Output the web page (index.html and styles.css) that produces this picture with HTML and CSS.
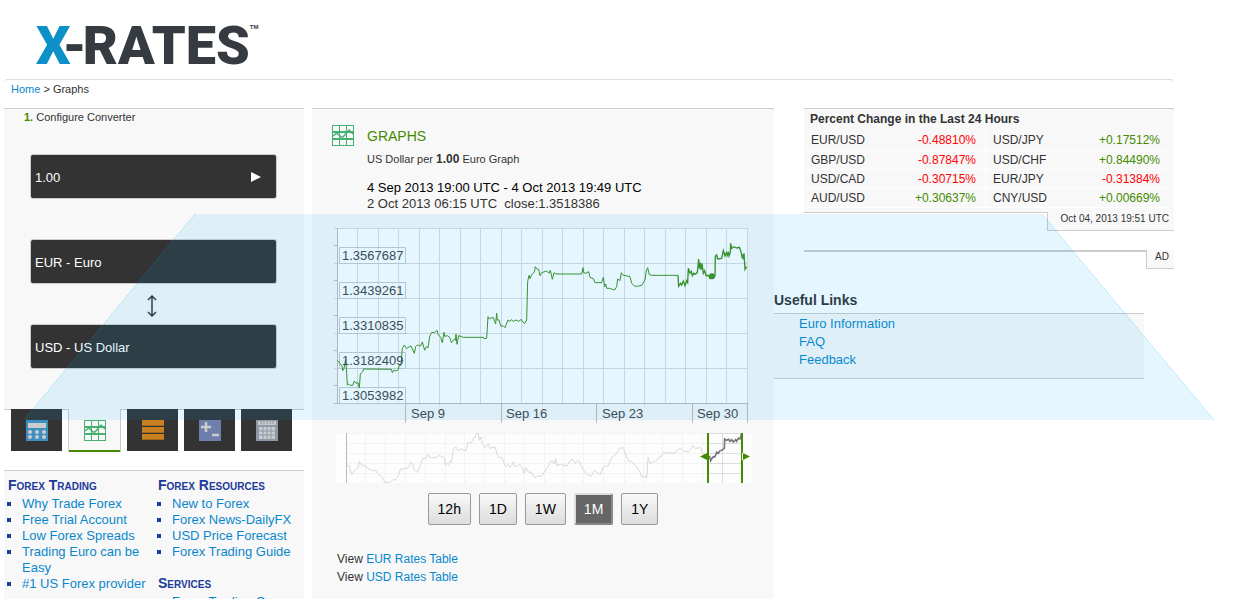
FILE: index.html
```html
<!DOCTYPE html>
<html lang="en">
<head>
<meta charset="utf-8">
<title>X-RATES Graphs</title>
<link rel="stylesheet" href="styles.css">
</head>
<body>
<svg class="defs" width="0" height="0" aria-hidden="true">
  <symbol id="graph-icon" viewBox="0 0 22 21">
    <path d="M0 0h22v21H0z" fill="#46b070"/>
    <path d="M1 1h6v5H1zM8 1h6v5H8zM15 1h6v5h-6zM1 8h6v5H1zM8 8h6v5H8zM15 8h6v5h-6zM1 15h6v5H1zM8 15h6v5H8zM15 15h6v5h-6z" fill="#f8f8f8"/>
    <path d="M1 11l4-3 4 4 2 0 6-7 4 4" fill="none" stroke="#46b070" stroke-width="1.500"/>
  </symbol>
</svg>
<div class="page">
  <header class="masthead">
    <a class="logo" href="#"><span class="logo-x">X</span><span class="logo-dash">-</span>RATES<small class="tm">TM</small></a>
  </header>
  <nav class="crumbs"><a href="#">Home</a> &gt; Graphs</nav>
  <main class="columns">
    <div class="left">
      <form class="converter">
        <h2 class="step"><b>1.</b> Configure Converter</h2>
        <div class="field amount">
          <input class="control" type="text" value="1.00" aria-label="Amount">
          <button class="go" type="button" aria-label="Convert"><svg width="10" height="10" viewBox="0 0 10 10"><path d="M0 0l10 5-10 5z" fill="#fff"/></svg></button>
        </div>
        <div class="field from"><select class="control" aria-label="From currency"><option>EUR - Euro</option></select></div>
        <button class="swap" type="button" aria-label="Swap currencies"><svg width="10" height="22" viewBox="0 0 10 22"><path d="M5 1v20M1 5l4-4 4 4M1 17l4 4 4-4" fill="none" stroke="#333" stroke-width="1.5"/></svg></button>
        <div class="field"><select class="control" aria-label="To currency"><option>USD - US Dollar</option></select></div>
      </form>
      <nav class="tabs">
        <a class="tab" href="#" aria-label="Calculator"><svg width="22" height="21" viewBox="0 0 22 21"><path d="M0 0h22v21H0z" fill="#3f8fc0"/><path d="M2 3h18v5H2z" fill="#ccc"/><g fill="#ccc"><circle cx="4" cy="12" r="2"/><circle cx="11" cy="12" r="2"/><circle cx="18" cy="12" r="2"/><circle cx="4" cy="17" r="2"/><circle cx="11" cy="17" r="2"/><circle cx="18" cy="17" r="2"/></g></svg></a>
        <a class="tab active" href="#" aria-label="Graphs"><svg width="22" height="21"><use href="#graph-icon"/></svg></a>
        <a class="tab" href="#" aria-label="Table"><svg width="22" height="21" viewBox="0 0 22 21"><path d="M0 0h22v6H0zM0 7h22v6H0zM0 14h22v6H0z" fill="#c98020"/><path d="M0 5h22v1H0zM0 12h22v1H0zM0 19h22v1H0z" fill="#a46a1c"/></svg></a>
        <a class="tab" href="#" aria-label="Historic"><svg width="22" height="21" viewBox="0 0 22 21"><path d="M0 0h22v21H0z" fill="#6e7fae"/><path d="M2 7h10M7 2v10M13 15h7" stroke="#ccc" stroke-width="2.5"/></svg></a>
        <a class="tab" href="#" aria-label="Monthly average"><svg width="22" height="21" viewBox="0 0 22 21"><path d="M0 0h22v21H0z" fill="#8f98a8"/><path d="M2 1h18v4H2z" fill="#c8c8c8"/><path d="M5 1v3M8 1v3M11 1v3M14 1v3M17 1v3" stroke="#8f98a8"/><path d="M3 7h16v12H3z" fill="#ccc"/><path d="M3 11h16M3 15h16M7 7v12M11 7v12M15 7v12" stroke="#8f98a8"/></svg></a>
      </nav>
      <section class="forex">
        <div>
          <h3>Forex Trading</h3>
          <ul>
            <li><a href="#">Why Trade Forex</a></li>
            <li><a href="#">Free Trial Account</a></li>
            <li><a href="#">Low Forex Spreads</a></li>
            <li><a href="#">Trading Euro can be Easy</a></li>
            <li><a href="#">#1 US Forex provider</a></li>
          </ul>
        </div>
        <div>
          <h3>Forex Resources</h3>
          <ul>
            <li><a href="#">New to Forex</a></li>
            <li><a href="#">Forex News-DailyFX</a></li>
            <li><a href="#">USD Price Forecast</a></li>
            <li><a href="#">Forex Trading Guide</a></li>
          </ul>
          <h3>Services</h3>
          <ul><li><a href="#">Forex Trading Co</a></li></ul>
        </div>
      </section>
    </div>

    <section class="graphs">
      <div class="heading">
        <svg width="22" height="21"><use href="#graph-icon"/></svg>
        <h1>GRAPHS</h1>
      </div>
      <p class="subtitle">US Dollar per <b>1.00</b> Euro Graph</p>
      <p class="range">4 Sep 2013 19:00 UTC - 4 Oct 2013 19:49 UTC</p>
      <p class="close">2 Oct 2013 06:15 UTC&nbsp; close:1.3518386</p>
      <svg class="chart" viewBox="312 220 462 265" role="img" aria-label="US Dollar per Euro, one month">
        <path d="M337 228h410v175H337z" fill="#fff"/>
        <path class="grid" d="M357.5 228v175M378.5 228v175M398.5 228v175M419.5 228v175M439.5 228v178M460.5 228v175M480.5 228v175M501.5 228v175M521.5 228v175M542.5 228v178M562.5 228v175M583.5 228v175M603.5 228v175M624.5 228v175M644.5 228v178M665.5 228v175M685.5 228v175M706.5 228v175M726.5 228v175M747.5 228v175M334 228.5h414M334 263.5h414M334 298.5h414M334 333.5h414M334 368.5h414"/>
        <path class="axis" d="M337.5 228v176M334 403.5h414M334 245.5h3M334 280.5h3M334 315.5h3M334 350.5h3M334 385.5h3M405.5 403v20M501.5 403v20M596.5 403v20M692.5 403v20M747.5 403v20"/>
        <g class="tag"><path d="M339.5 247.5h66v16h-66zM339.5 282.5h66v16h-66zM339.5 317.5h66v16h-66zM339.5 352.5h66v16h-66zM339.5 387.5h66v16h-66z"/></g>
        <g class="trend" transform="translate(330 220) scale(.33333)">
          <polyline points="22,421 30,430 36,438 38,452 42,445 47,418 50,460 52,495 56,492 60,496 68,496 73,483 78,490 84,488 88,504 91,462 98,455 101,447 184,448 187,458 192,450 198,453 205,449 208,435 213,436 217,385 223,375 230,386 238,380 243,378 253,400 257,380 262,375 272,378 277,366 284,391 289,380 294,384 299,350 305,337 313,338 321,331 324,343 332,352 337,368 342,337 344,349 352,347 359,352 364,368 372,358 376,361 378,342 381,373 386,347 400,352 460,352 462,356 470,355 474,290 478,297 482,294 490,293 497,312 500,280 502,300 507,300 512,318 520,318 525,323 534,300 540,304 544,299 550,304 560,300 566,304 574,298 578,306 584,310 590,300 593,185 597,166 600,176 605,164 613,156 616,140 620,146 626,148 630,167"/>
        </g>
        <g class="trend" transform="translate(540 220) scale(.33333)">
          <polyline points="0,167 5,158 20,153 27,160 31,151 37,178 42,158 48,162 125,162 129,143 131,158 138,160 146,155 150,172 160,176 165,188 185,188 190,172 194,200 197,192 200,205 208,205 217,208 224,210 230,200 233,177 240,182 244,158 250,166 258,167 270,170 275,190 283,198 292,199 305,196 315,180 319,152 323,143 328,164 335,166 414,166"/>
          <polyline class="dense" points="414,166 416,199 422,190 425,195 430,183 435,197 440,182 443,188 445,145 450,160 454,154 457,167 461,160 465,163 472,158 476,117 478,145 480,128 483,150 486,130 490,160 494,152 498,167 505,166 510,175 514,164 520,174 525,168 526,108 530,105 533,117 545,115 550,92 555,108 559,98 562,106 565,95 567,108 571,98 572,70 575,85 582,80 590,84 598,82 603,95 606,110 608,104 610,118 612,100 615,148 620,140"/>
          <circle cx="516" cy="169" r="9"/>
        </g>
        <g class="labels">
          <text x="342" y="260">1.3567687</text><text x="342" y="295">1.3439261</text><text x="342" y="330">1.3310835</text><text x="342" y="365">1.3182409</text><text x="342" y="400">1.3053982</text>
          <text x="411" y="418">Sep 9</text><text x="506" y="418">Sep 16</text><text x="602" y="418">Sep 23</text><text x="697" y="418">Sep 30</text>
        </g>
        <path d="M336 433h416v50H336z" fill="#fdfdfd"/>
        <path class="mini-grid" d="M346 433.5h396M346 443.5h396M346 453.5h396M346 463.5h396M346 473.5h396M365.5 433v50M385.5 433v50M405.5 433v50M425.5 433v50M445.5 433v50M464.5 433v50M484.5 433v50M504.5 433v50M524.5 433v50M544.5 433v50M563.5 433v50M583.5 433v50M603.5 433v50M624.5 433v50M643.5 433v50M662.5 433v50M682.5 433v50M702.5 433v50"/>
        <path class="window-grid" d="M708 433.5h34M708 443.5h34M708 453.5h34M708 463.5h34M708 473.5h34M722.5 433v50"/>
        <path d="M346.5 433v50" stroke="#bbb"/>
        <g class="history" transform="translate(330 425) scale(.33333)">
          <polyline points="50,121 58,123 62,138 66,149 72,138 80,131 84,130 88,109 92,116 98,124 105,119 110,128 120,134 130,137 138,137 145,149 155,154 165,173 180,172 190,163 196,165 205,152 212,131 220,133 235,127 243,112 248,118 252,134 262,142 270,124 278,101 288,100 292,91 296,88 300,98 320,97 328,91 335,95 342,97 346,120 352,115 356,119 360,108 364,112 370,73 378,66 385,78 390,72 408,77 413,54 425,52 430,40 435,37 440,25 445,25 448,46 453,36 458,60 465,68 475,56 480,70 495,66 500,84 505,97 515,97 525,121 530,123 535,118 540,127 545,122 550,110 553,123 562,124 570,118 576,125 582,145 588,128 593,140 605,143 613,158 630,152"/>
        </g>
        <g class="history" transform="translate(540 425) scale(.33333)">
          <polyline points="0,152 5,154 20,130 35,107 42,117 47,101 50,122 62,117 72,122 83,121 87,112 96,101 105,115 115,106 122,118 130,136 140,147 152,154 160,143 165,137 180,150 190,125 205,122 215,97 228,88 238,70 250,68 257,90 265,108 275,110 290,125 300,142 305,155 318,155 320,160 324,97 330,116 350,107 358,96 366,92 370,83 405,85 412,76 420,70 430,78 445,81 455,70 458,61 465,70 482,68 487,84 500,90"/>
          <polyline class="selected" points="504,97 509,95 512,107 518,97 525,95 530,82 535,85 540,77 545,76 553,70 554,42 560,46 566,43 570,49 575,44 580,51 587,44 590,49 595,40 600,42 605,25"/>
        </g>
        <path d="M707 433h2v50h-2zM741 433h2v50h-2zM700 456.500l8-4v8zM750 456.500l-8-4v8z" fill="#458b00"/>
      </svg>
      <div class="periods">
        <button type="button">12h</button><button type="button">1D</button><button type="button">1W</button><button type="button" class="on">1M</button><button type="button">1Y</button>
      </div>
      <p class="view">View <a href="#">EUR Rates Table</a></p>
      <p class="view">View <a href="#">USD Rates Table</a></p>
    </section>

    <aside class="right">
      <section class="changes">
        <h2>Percent Change in the Last 24 Hours</h2>
        <table>
          <tr><td>EUR/USD</td><td class="down">-0.48810%</td><td>USD/JPY</td><td class="up">+0.17512%</td></tr>
          <tr><td>GBP/USD</td><td class="down">-0.87847%</td><td>USD/CHF</td><td class="up">+0.84490%</td></tr>
          <tr><td>USD/CAD</td><td class="down">-0.30715%</td><td>EUR/JPY</td><td class="down">-0.31384%</td></tr>
          <tr><td>AUD/USD</td><td class="up">+0.30637%</td><td>CNY/USD</td><td class="up">+0.00669%</td></tr>
        </table>
      </section>
      <div class="foot date"><span class="rule"></span><span class="flag">Oct 04, 2013 19:51 UTC</span></div>
      <div class="foot ad"><span class="rule"></span><span class="flag">AD</span></div>
      <section class="useful">
        <h2>Useful Links</h2>
        <ul>
          <li><a href="#">Euro Information</a></li>
          <li><a href="#">FAQ</a></li>
          <li><a href="#">Feedback</a></li>
        </ul>
      </section>
    </aside>
  </main>
</div>
<svg class="beam" width="1190" height="206" viewBox="0 0 1190 206" aria-hidden="true">
  <path d="M171 0h847l172 206H0z" fill="#0af" fill-opacity=".1"/>
  <path d="M171 0L0 206M1018 0l172 206" fill="none" stroke="#0af" stroke-opacity=".3" stroke-dasharray="2 1"/>
</svg>
</body>
</html>
```
FILE: styles.css
```css
* { box-sizing: border-box; }
html { overflow: hidden; }
body {
  margin: 0;
  background: #fff;
  color: #333;
  font: 13px/16px "Liberation Sans", Arial, sans-serif;
}
h1, h2, h3, p, ul { margin: 0; padding: 0; }
a { color: #0a87cc; text-decoration: none; }
ul { list-style: none; }
button { font-family: inherit; cursor: pointer; }
.defs { position: absolute; }
.page { margin: 0 64px 0 4px; }

.masthead { height: 79px; padding: 15px 0 0 32px; }
.logo {
  display: inline-flex;
  align-items: flex-start;
  color: #363b42;
  font: 900 54px/62px Roboto, "Liberation Sans", sans-serif;
}
.logo-x { color: #0d8fc8; }
.logo-dash { margin: 0 -4px 0 -8px; }
.tm { padding-top: 8px; font: bold 6px/8px "Liberation Sans", sans-serif; }

.crumbs {
  height: 29px;
  padding: 1px 7px;
  border-top: 1px solid #ddd;
  border-radius: 4px 4px 0 0;
  font-size: 11px;
}
.columns {
  display: grid;
  grid-template-columns: 300px minmax(0, 1fr) 370px;
  align-items: start;
}

.converter {
  height: 302px;
  padding: 0 27px 0 26px;
  background: #f8f8f8;
  border-top: 1px solid #ccc;
  border-bottom: 1px solid #ccc;
}
.step { margin-left: -6px; font-size: 11px; font-weight: normal; }
.step b { color: #458b00; }
.field { position: relative; height: 45px; }
.amount { margin: 29px 0 40px; }
.control {
  display: block;
  width: 100%;
  height: 45px;
  padding: 2px 4px 0;
  border: 1px solid #ccc;
  border-radius: 3px;
  background: #333;
  color: #fff;
  font: 13px "Liberation Sans", Arial, sans-serif;
  appearance: none;
}
.go {
  position: absolute;
  top: 14px;
  right: 10px;
  display: grid;
  place-items: center;
  width: 22px;
  height: 18px;
  padding: 0;
  border: 0;
  background: none;
}
.swap {
  display: grid;
  place-items: center;
  width: 100%;
  height: 40px;
  padding: 4px 3px 0 0;
  border: 0;
  background: none;
}

.tabs { display: flex; gap: 6px; height: 43px; margin-top: -1px; padding: 0 12px 0 7px; }
.tab {
  flex: 1;
  display: flex;
  justify-content: center;
  align-items: center;
  height: 42px;
  background: #333;
}
.active {
  height: 43px;
  border: solid #ccc;
  border-width: 0 1px;
  background: linear-gradient(#458b00, #458b00) bottom / 100% 2px no-repeat #f8f8f8;
}

.forex {
  display: grid;
  grid-template-columns: 1fr 1fr;
  gap: 4px;
  min-height: 150px;
  margin-top: 18px;
  padding: 6px 0 0 4px;
  border-top: 1px solid #ccc;
  background: #f8f8f8;
}
.forex h3 { margin-bottom: 3px; color: #1c3a9a; font-size: 14px; line-height: 16px; font-variant: small-caps; }
.forex ul + h3 { margin-top: 15px; }
.forex li { position: relative; padding: 0 2px 0 14px; }
.forex li::before { content: ""; position: absolute; left: -1px; top: 6px; width: 4px; height: 4px; background: #1c3a9a; }

.graphs { margin: 0 30px 0 8px; padding-bottom: 40px; border-top: 1px solid #ccc; background: #f8f8f8; }
.heading { display: flex; gap: 13px; padding: 16px 20px 0; }
h1 { color: #458b00; font-size: 14px; line-height: 22px; font-weight: normal; }
.subtitle, .range, .close { padding-left: 55px; }
.subtitle { padding-top: 4px; font-size: 11px; }
.subtitle b { font-size: 12px; }
.range { padding-top: 13px; color: #000; }
.close { line-height: 15px; }
.chart { display: block; width: 100%; margin-top: 9px; }
.grid { stroke: #d8dde0; fill: none; }
.axis { stroke: #bbb; fill: none; }
.tag { stroke: #c4cacd; fill: #fff; fill-opacity: .4; }
.trend polyline { fill: none; stroke: #3f8f18; stroke-width: 3; }
.trend .dense { stroke-width: 4; }
.trend circle { fill: #3f8f18; }
.labels { fill: #444; font-size: 13px; }
.mini-grid { stroke: #f3f3f3; fill: none; }
.window-grid { stroke: #ddd; fill: none; }
.history polyline { fill: none; stroke: #d8d8d8; stroke-width: 3; }
.history .selected { stroke: #777; stroke-width: 5; }
.periods { display: flex; justify-content: center; gap: 8px; padding-top: 8px; }
.periods button {
  height: 32px;
  padding: 0 9px;
  border: 1px solid #999;
  border-radius: 2px;
  background: linear-gradient(#f8f8f8, #ddd);
  color: #000;
  font-size: 14px;
}
.periods .on { background: #666; border: 2px outset #ddd; color: #fff; padding: 0 8px; }
.view { padding-left: 25px; font-size: 12px; line-height: 18px; }
.periods + .view { margin-top: 25px; }

.changes { padding: 2px 7px 4px 0; border-top: 1px solid #ccc; background: #f8f8f8; }
.changes h2 { padding-left: 6px; font-size: 12px; line-height: 16px; }
.changes table { width: 100%; margin-top: 4px; table-layout: fixed; border-collapse: collapse; font-size: 12px; }
.changes td { height: 19px; padding: 0 7px; border-bottom: 1px solid #fff; line-height: 18px; }
.changes td:nth-child(2) { padding-right: 9px; border-right: 1px solid #fff; }
.changes td:nth-child(even) { text-align: right; }
.changes .up { color: #458b00; }
.changes .down { color: #f00; }
.foot { display: flex; }
.rule { flex: 1; border-top: 1px solid #ccc; }
.flag {
  padding: 0 5px 5px 8px;
  border-left: 1px solid #ccc;
  border-bottom: 1px solid #ccc;
  background: #f8f8f8;
  font-size: 10px;
  line-height: 13px;
}
.date .flag { padding-left: 13px; }
.ad { margin-top: 19px; }
.ad .rule { border-top-width: 2px; }
.useful { margin: 22px 30px 0 -30px; }
.useful h2 { font-size: 14px; line-height: 18px; }
.useful ul { margin-top: 4px; padding: 1px 25px 9px; border: solid #ccc; border-width: 1px 0; background: #f8f8f8; }
.useful li { line-height: 18px; }
.beam { position: absolute; left: 24px; top: 214px; pointer-events: none; }
```
